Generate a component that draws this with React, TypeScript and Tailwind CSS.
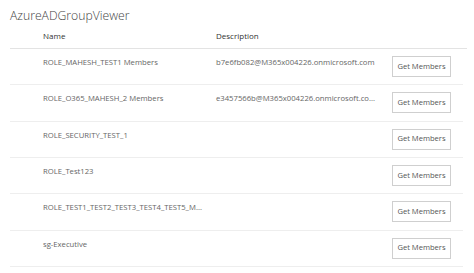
const groups = [
  { name: 'ROLE_MAHESH_TEST1 Members', desc: 'b7e6fb082@M365x004226.onmicrosoft.com' },
  { name: 'ROLE_O365_MAHESH_2 Members', desc: 'e3457566b@M365x004226.onmicrosoft.co...' },
  { name: 'ROLE_SECURITY_TEST_1', desc: '' },
  { name: 'ROLE_Test123', desc: '' },
  { name: 'ROLE_TEST1_TEST2_TEST3_TEST4_TEST5_M...', desc: '' },
  { name: 'sg-Executive', desc: '' },
];

export default function App() {
  return (
    <div
      className="w-[474px] h-[273px] bg-white overflow-hidden pl-[10px] pr-[7px] pt-[7px]"
      style={{ fontFamily: "'Open Sans', 'Noto Sans', sans-serif" }}
    >
      <h1 className="text-[12.2px] leading-[17px] font-light text-[#444]">AzureADGroupViewer</h1>

      {/* Header */}
      <div className="flex h-[25px] items-center border-b border-[#e3e3e3] text-[8px] text-[#333]">
        <div className="w-[206px] pl-[33px]">Name</div>
        <div>Description</div>
      </div>

      {groups.map((g) => (
        <div
          key={g.name}
          className="flex items-start h-[36.33px] border-b border-[#eeeeee] mr-[4px] text-[7.7px] text-[#666]"
        >
          <div className="w-[206px] pl-[33px] pt-[8px] leading-[11px] whitespace-nowrap">{g.name}</div>
          <div className="w-[176px] pt-[8px] leading-[11px] whitespace-nowrap">{g.desc}</div>
          <button className="mt-[7px] w-[59px] h-[21px] border border-[#cfcfcf] bg-white text-[7.6px] text-[#555]">
            Get Members
          </button>
        </div>
      ))}
    </div>
  );
}
